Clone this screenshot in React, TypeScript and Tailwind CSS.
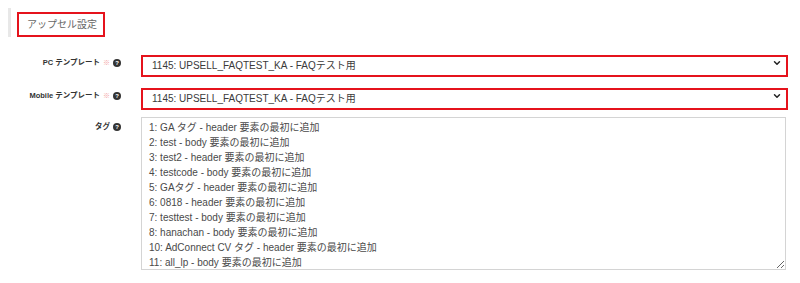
import { ChevronDown } from 'lucide-react';

const tags = [
    '1: GA タグ - header 要素の最初に追加',
    '2: test - body 要素の最初に追加',
    '3: test2 - header 要素の最初に追加',
    '4: testcode - body 要素の最初に追加',
    '5: GAタグ - header 要素の最初に追加',
    '6: 0818 - header 要素の最初に追加',
    '7: testtest - body 要素の最初に追加',
    '8: hanachan - body 要素の最初に追加',
    '10: AdConnect CV タグ - header 要素の最初に追加',
    '11: all_lp - body 要素の最初に追加',
];

function Help() {
    return (
        <span className="inline-flex w-[8px] h-[8px] rounded-full bg-[#333] text-white text-[6px] font-bold leading-none items-center justify-center">
            ?
        </span>
    );
}

function FieldLabel({ text, required }: { readonly text: string; readonly required?: boolean }) {
    return (
        <div className="w-[141px] shrink-0 flex items-center justify-end gap-[3px] pr-[20px] text-[7.5px] font-bold text-[#333] h-[22px] whitespace-nowrap">
            <span>{text}</span>
            {required && <span className="text-[#f3a3a3] text-[7px] font-normal">※</span>}
            <Help />
        </div>
    );
}

function TemplateSelect({ label }: { readonly label: string }) {
    return (
        <div className="flex items-start">
            <FieldLabel text={label} required />
            <div className="relative w-[647px] h-[22px]">
                <select
                    defaultValue="1145"
                    className="appearance-none w-full h-full border-2 border-[#e5131c] bg-white pl-[9px] text-[10px] text-[#3a3a3a] outline-none"
                >
                    <option value="1145">1145: UPSELL_FAQTEST_KA - FAQテスト用</option>
                </select>
                <ChevronDown className="absolute right-[6px] top-[6px] w-[10px] h-[10px] text-[#222] pointer-events-none" strokeWidth={3.5} />
            </div>
        </div>
    );
}

export default function App() {
    return (
        <div className="w-[800px] h-[283px] bg-white overflow-hidden font-['Liberation_Sans','Noto_Sans_CJK_JP',sans-serif] pt-[8px]">
            <div className="ml-[8px] h-[29px] border-l-[3px] border-[#e8e8e8] pl-[6px] pt-[4px]">
                <div className="w-[88px] h-[25px] border-2 border-[#e5131c] flex items-center pl-[8px] text-[10px] text-[#666] whitespace-nowrap">
                    アップセル設定
                </div>
            </div>

            <div className="mt-[15px] flex flex-col">
                <TemplateSelect label="PC テンプレート" />
                <div className="mt-[11px]">
                    <TemplateSelect label="Mobile テンプレート" />
                </div>
                <div className="mt-[10px] flex items-start">
                    <div className="w-[141px] shrink-0 flex items-center justify-end gap-[3px] pr-[20px] text-[7.5px] font-bold text-[#333] pt-[4px]">
                        <span>タグ</span>
                        <Help />
                    </div>
                    <textarea
                        readOnly
                        value={tags.join('\n')}
                        className="w-[645px] h-[153px] border border-[#d4d4d4] bg-white pl-[7px] pt-[2px] text-[10px] leading-[15px] text-[#4a4a4a] outline-none"
                    />
                </div>
            </div>

            <div className="ml-[8px] mt-[13px] h-[10px] border-l-[3px] border-[#e8e8e8]" />
        </div>
    );
}
